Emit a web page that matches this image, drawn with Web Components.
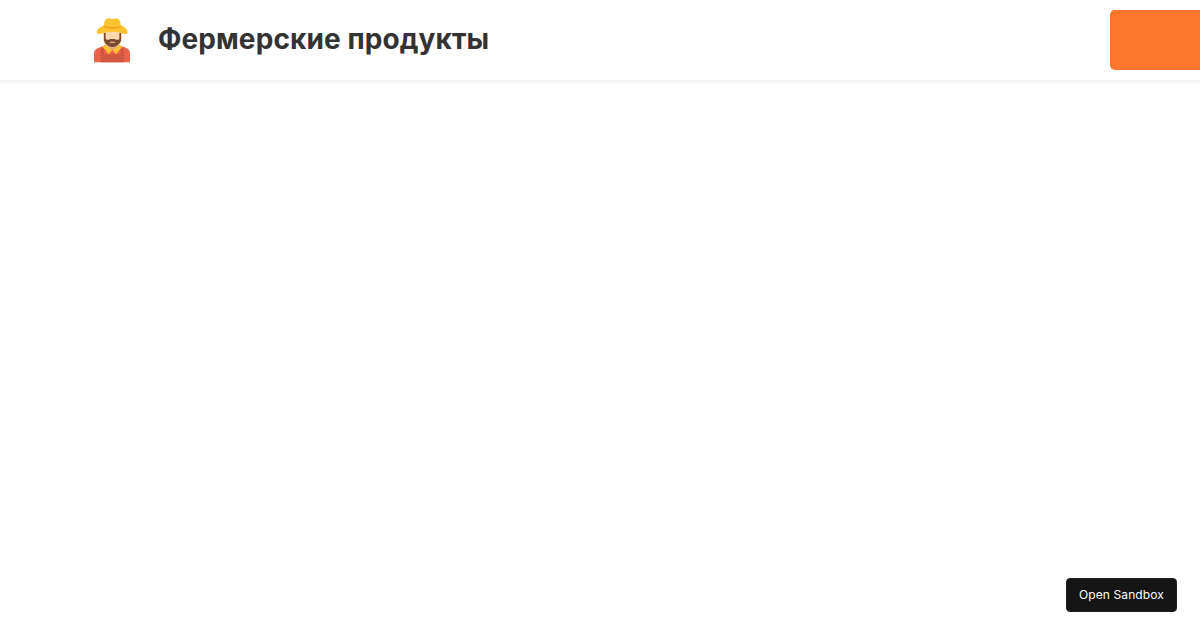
<!DOCTYPE html>
<html lang="ru">
<head>
<meta charset="utf-8">
<title>Фермерские продукты</title>
<style>
    html, body { margin: 0; height: 100%; background: #fff; }
    body { display: flex; flex-direction: column; overflow: hidden; }
</style>
</head>
<body>
<site-header>Фермерские продукты</site-header>
<sandbox-link>Open Sandbox</sandbox-link>

<template id="header-template">
    <style>
        :host {
            display: flex;
            align-items: center;
            justify-content: space-between;
            height: 80px;
            padding-left: 80px;
            box-sizing: border-box;
            background: #fff;
            box-shadow: 0 2px 4px rgba(0, 0, 0, 0.07);
            font-family: Inter, "Liberation Sans", sans-serif;
        }
        .brand {
            display: flex;
            align-items: center;
            gap: 8px;
        }
        svg {
            display: block;
            width: 70px;
            height: 70px;
        }
        h1 {
            margin: 0;
            padding-bottom: 2px;
            font-size: 28px;
            font-weight: 700;
            letter-spacing: .1px;
            color: #333;
        }
        button {
            width: 90px;
            height: 60px;
            padding: 0;
            border: 0;
            border-radius: 5px 0 0 5px;
            background: #ff752b;
        }
    </style>
    <div class="brand">
        <svg viewBox="0 0 210 210">
            <!-- shirt and overalls -->
            <path d="M42 172V146Q42 132 56 128L78 120H116L138 128Q150 132 150 146V172Z" fill="#ea6248"/>
            <path d="M62 172V130H72V148H122V130H132V172Z" fill="#cf563f"/>
            <!-- collar -->
            <path d="M68 125L82 116L97 134L86 148ZM126 125L112 116L97 134L108 148Z" fill="#fdc32e"/>
            <!-- neck and face -->
            <path d="M82 105H112V126L97 136L82 126Z" fill="#e8a877"/>
            <path d="M68 66H127V92Q127 126 97 126Q68 126 68 92Z" fill="#fbd9b0"/>
            <!-- hair and beard -->
            <path d="M72 84H77V104H72ZM118 84H123V104H118Z" fill="#7a4a32"/>
            <path d="M72 100Q84 108 90 102H105Q111 108 123 100V108Q114 126 97 126Q81 126 72 108Z" fill="#7a4a32"/>
            <path d="M90 110H105V114H90Z" fill="#e8a877"/>
            <!-- hat -->
            <path d="M50 80Q52 70 72 60Q72 40 86 40Q97 44 108 40Q122 40 122 60Q140 68 143 80Q144 90 132 86Q116 80 97 80Q78 80 62 86Q50 90 50 80Z" fill="#fdc32e"/>
            <path d="M73 62Q97 70 121 62L122 68Q97 75 72 68Z" fill="#f2a723"/>
        </svg>
        <h1><slot></slot></h1>
    </div>
    <button type="button" aria-label="Меню"></button>
</template>

<template id="sandbox-template">
    <style>
        :host {
            position: fixed;
            right: 23px;
            bottom: 18px;
            display: block;
        }
        a {
            display: block;
            width: 111px;
            height: 34px;
            box-sizing: border-box;
            border: 1px solid #222;
            border-radius: 4px;
            background: #151515;
            color: #fff;
            font: 400 12px/32px Inter, sans-serif;
            letter-spacing: .1px;
            text-align: center;
            text-decoration: none;
        }
    </style>
    <a href="#"><slot></slot></a>
</template>

<script>
    class SiteHeader extends HTMLElement {
        constructor() {
            super();
            let shadowRoot = this.attachShadow({mode:'open'});
            shadowRoot.appendChild(document.getElementById('header-template').content.cloneNode(true));
        }
    }

    class SandboxLink extends HTMLElement {
        constructor() {
            super();
            let shadowRoot = this.attachShadow({mode:'open'});
            shadowRoot.appendChild(document.getElementById('sandbox-template').content.cloneNode(true));
        }
    }

    window.customElements.define('site-header', SiteHeader);
    window.customElements.define('sandbox-link', SandboxLink);
</script>
</body>
</html>
